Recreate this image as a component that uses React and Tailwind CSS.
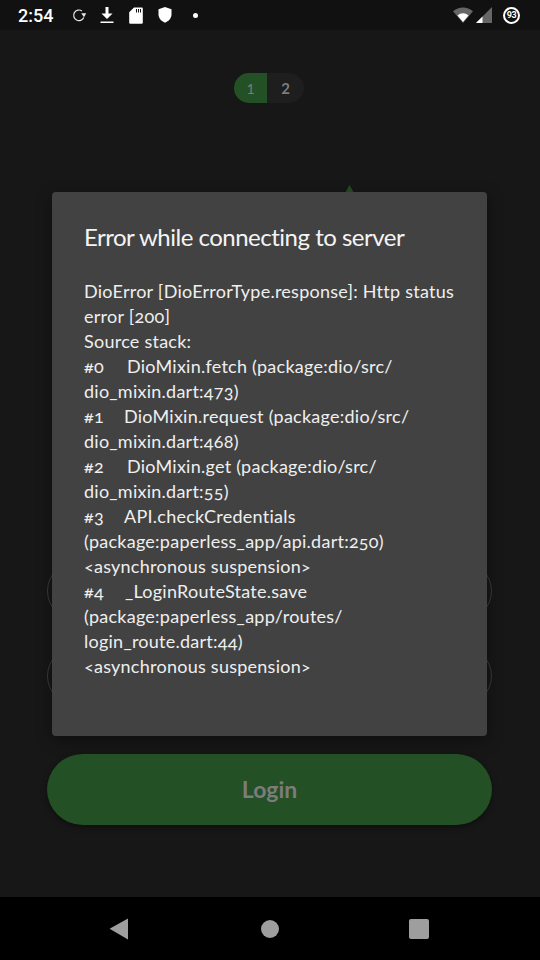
const lines = [
  ["", "DioError [DioErrorType.response]: Http status"],
  ["", "error [200]"],
  ["", "Source stack:"],
  ["w-[43px]", "#0", "DioMixin.fetch (package:dio/src/"],
  ["", "dio_mixin.dart:473)"],
  ["w-[40px]", "#1", "DioMixin.request (package:dio/src/"],
  ["", "dio_mixin.dart:468)"],
  ["w-[43px]", "#2", "DioMixin.get (package:dio/src/"],
  ["", "dio_mixin.dart:55)"],
  ["w-[40px]", "#3", "API.checkCredentials"],
  ["", "(package:paperless_app/api.dart:250)"],
  ["", "<asynchronous suspension>"],
  ["w-[41px]", "#4", "_LoginRouteState.save"],
  ["", "(package:paperless_app/routes/"],
  ["", "login_route.dart:44)"],
  ["", "<asynchronous suspension>"],
];

function StatusLeft() {
  return (
    <div className="flex items-center">
      <span className="w-[36px] text-[18px] font-medium text-white font-['Roboto',sans-serif] ml-[18px]">2:54</span>
      <svg className="ml-[17px]" width="16" height="16" viewBox="0 0 16 16" fill="none">
        <path d="M12.8 10.500A5.300 5.300 0 1 1 10.900 3.900" stroke="#e8e8e8" strokeWidth="1.200" />
        <path d="M10.200 6.300h5L13 10.200z" fill="#e8e8e8" />
      </svg>
      <svg className="ml-[13px]" width="14" height="18" viewBox="0 0 14 18" fill="#fff">
        <path d="M5.5 1h3v6.5h4L7 13 1.500 7.500h4z" />
        <rect x="0.500" y="15.500" width="13" height="1.500" />
      </svg>
      <svg className="ml-[15px]" width="14" height="17" viewBox="0 0 14 17" fill="#fff">
        <path d="M5 .5h7.500A1.200 1.200 0 0 1 13.800 1.800v13.700a1.200 1.200 0 0 1-1.300 1.200h-11A1.200 1.200 0 0 1 .2 15.500V5.300z" />
        <path d="M7 2h1v3.500H7zM9 2h1v3.500H9zM11 2h1v3.500h-1z" fill="#111" />
      </svg>
      <svg className="ml-[15px]" width="14" height="16" viewBox="0 0 14 16" fill="#fff">
        <path d="M7 0 13.500 2.300v5c0 4-2.800 7-6.500 8.500C3.300 14.300.5 11.300.5 7.300v-5z" />
      </svg>
      <span className="ml-[21px] w-[5px] h-[5px] rounded-full bg-white" />
    </div>
  );
}

function StatusRight() {
  return (
    <div className="flex items-center">
      <svg width="20" height="16" viewBox="0 0 20 16">
        <path d="M0 4.300C5.500-.9 14.500-.9 20 4.300L10 16z" fill="#666" />
        <path d="M4.500 9.500a8 8 0 0 1 11 0L10 16z" fill="#fff" transform="translate(0 -1)" />
      </svg>
      <svg className="ml-[3px]" width="17" height="16" viewBox="0 0 17 16">
        <path d="M16 0v16H0z" fill="#666" />
        <path d="M6.500 9.500V16H0z" fill="#fff" />
      </svg>
      <div className="ml-[10px] w-[17px] h-[17px] rounded-full border-[2.500px] border-white flex items-center justify-center">
        <span className="text-[9px] leading-none font-bold text-white font-['Roboto',sans-serif] tracking-[-0.5px]">93</span>
      </div>
    </div>
  );
}

export default function App() {
  return (
    <div className="w-[540px] h-[960px] flex flex-col bg-[#171717] overflow-hidden font-['Lato',sans-serif]">
      <div className="h-[30px] shrink-0 bg-[#111111] flex items-center justify-between pr-[20px]">
        <StatusLeft />
        <StatusRight />
      </div>

      <div className="relative flex-1 flex flex-col items-center">
        <div className="mt-[43px] mr-[2px] flex h-[30px] w-[70px] rounded-full overflow-hidden">
          <div className="w-[33px] bg-[#235024] flex items-center justify-center text-[14px] text-[#7c7c7c]">1</div>
          <div className="flex-1 bg-[#1e1e1e] flex items-center justify-center text-[15px] font-bold text-[#7c7c7c]">2</div>
        </div>

        <svg className="mt-[82px] ml-[160px]" width="12" height="8" viewBox="0 0 12 8">
          <path d="M5.500 0 10 8H1z" fill="#235024" />
        </svg>

        <div className="mt-[368px] mr-[1px] w-[445px] h-[60px] rounded-full border border-[#3c3c3c]" />
        <div className="mt-[25px] mr-[1px] w-[445px] h-[60px] rounded-full border border-[#3c3c3c]" />

        <div className="mt-[48px] mr-[1px] w-[445px] h-[71px] rounded-full bg-[#235024] shadow-[0_2px_6px_rgba(0,0,0,0.4)] flex items-center justify-center">
          <span className="text-[23px] font-bold text-[#7c7c7c]">Login</span>
        </div>

        <div className="absolute left-[52px] top-[162px] w-[435px] h-[544px] rounded-[4px] bg-[#424242] shadow-[0_4px_16px_rgba(0,0,0,0.4)] pl-[32px] pr-[24px] pt-[30px] text-white">
          <div className="text-[24px] leading-[30px] text-[#f4f4f4] tracking-[-0.5px] oldstyle-nums">Error while connecting to server</div>
          <div className="mt-[27px] text-[18px] leading-[25px] text-[#efefef] tracking-[0.25px] oldstyle-nums whitespace-nowrap">
            {lines.map((l, i) =>
              l.length === 3 ? (
                <div key={i}>
                  <span className={`inline-block ${l[0]}`}>{l[1]}</span>
                  {l[2]}
                </div>
              ) : (
                <div key={i}>{l[1]}</div>
              )
            )}
          </div>
        </div>
      </div>

      <div className="h-[63px] shrink-0 bg-black flex items-center justify-between pl-[109px] pr-[111px]">
        <svg width="20" height="22" viewBox="0 0 20 22"><path d="M19 0.500V21.500L1 11Q0.500 11 1 10.500z" fill="#9e9e9e" /></svg>
        <span className="ml-[2px] w-[18px] h-[18px] rounded-full bg-[#9e9e9e]" />
        <span className="w-[20px] h-[20px] rounded-[2px] bg-[#9e9e9e]" />
      </div>
    </div>
  );
}
